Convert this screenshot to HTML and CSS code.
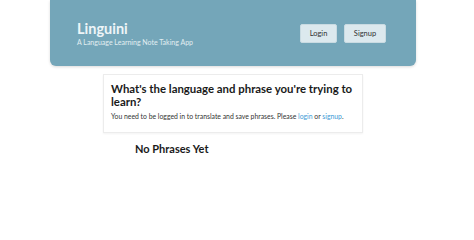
FILE: index.html
```html
<!DOCTYPE html>
<html>
<head>
<meta charset="utf-8">
<link rel="stylesheet" href="styles.css">
</head>
<body>
<div class="page">
  <header class="header">
    <div class="brand">
      <div class="title">Linguini</div>
      <div class="subtitle">A Language Learning Note Taking App</div>
    </div>
    <div class="actions">
      <button class="btn btn-login">Login</button>
      <button class="btn btn-signup">Signup</button>
    </div>
  </header>
  <section class="card">
    <h2 class="card-title">What's the language and phrase you're trying to learn?</h2>
    <p class="card-text">You need to be logged in to translate and save phrases. Please <a href="#">login</a> or <a href="#">signup</a>.</p>
  </section>
  <h3 class="empty">No Phrases Yet</h3>
</div>
</body>
</html>
```
FILE: styles.css
```css
html, body {
  margin: 0;
  padding: 0;
  background: #ffffff;
}
body {
  font-family: Lato, "Open Sans", sans-serif;
  color: #1c1c1c;
}
.page {
  width: 366px;
  margin-left: 50px;
}
.header {
  height: 66px;
  box-sizing: border-box;
  background: #74a6b9;
  border-radius: 0 0 6px 6px;
  box-shadow: 0 1px 3px rgba(0,0,0,0.15);
  display: flex;
  align-items: center;
  justify-content: space-between;
  padding: 0 30px 0 27px;
}
.title {
  font-size: 14.5px;
  font-weight: 700;
  color: #eef5f8;
  line-height: 17px;
}
.subtitle {
  font-size: 7px;
  color: #e2eef2;
  line-height: 10px;
}
.actions {
  display: flex;
  gap: 7px;
}
.btn {
  height: 19px;
  padding: 0;
  border: 1px solid #c9dbe2;
  border-radius: 2px;
  background: #dce9ee;
  color: #333;
  font-family: Lato, "Open Sans", sans-serif;
  font-size: 7.5px;
}
.btn-login { width: 37px; }
.btn-signup { width: 42px; }
.card {
  margin: 8px 0 0 53px;
  width: 260px;
  height: 59px;
  box-sizing: border-box;
  border: 1px solid #ececec;
  box-shadow: 0 1px 2px rgba(0,0,0,0.05);
  padding: 8px 7px;
}
.card-title {
  margin: 0;
  font-size: 11.4px;
  line-height: 12.5px;
  font-weight: 700;
  color: #1a1a1a;
}
.card-text {
  margin: 4px 0 0;
  font-size: 6.85px;
  line-height: 9px;
  color: #333;
}
.card-text a {
  color: #3d9ad6;
  text-decoration: none;
}
.empty {
  margin: 9px 0 0 85px;
  font-size: 11px;
  font-weight: 700;
  color: #1a1a1a;
}
```
